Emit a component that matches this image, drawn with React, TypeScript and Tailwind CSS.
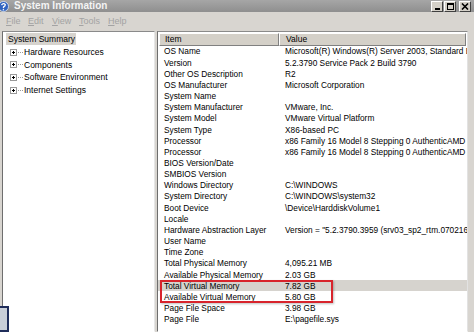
import React from 'react';

const ROWS: [string, string][] = [
  ['OS Name', 'Microsoft(R) Windows(R) Server 2003, Standard Edition'],
  ['Version', '5.2.3790 Service Pack 2 Build 3790'],
  ['Other OS Description', 'R2'],
  ['OS Manufacturer', 'Microsoft Corporation'],
  ['System Name', ''],
  ['System Manufacturer', 'VMware, Inc.'],
  ['System Model', 'VMware Virtual Platform'],
  ['System Type', 'X86-based PC'],
  ['Processor', 'x86 Family 16 Model 8 Stepping 0 AuthenticAMD ~2294 Mhz'],
  ['Processor', 'x86 Family 16 Model 8 Stepping 0 AuthenticAMD ~2294 Mhz'],
  ['BIOS Version/Date', ''],
  ['SMBIOS Version', ''],
  ['Windows Directory', 'C:\\WINDOWS'],
  ['System Directory', 'C:\\WINDOWS\\system32'],
  ['Boot Device', '\\Device\\HarddiskVolume1'],
  ['Locale', ''],
  ['Hardware Abstraction Layer', 'Version = "5.2.3790.3959 (srv03_sp2_rtm.070216-1710)"'],
  ['User Name', ''],
  ['Time Zone', ''],
  ['Total Physical Memory', '4,095.21 MB'],
  ['Available Physical Memory', '2.03 GB'],
  ['Total Virtual Memory', '7.82 GB'],
  ['Available Virtual Memory', '5.80 GB'],
  ['Page File Space', '3.98 GB'],
  ['Page File', 'E:\\pagefile.sys'],
];

const TREE = ['Hardware Resources', 'Components', 'Software Environment', 'Internet Settings'];
const MENU = ['File', 'Edit', 'View', 'Tools', 'Help'];

function CaptionButton({ children }: { children: React.ReactNode }) {
  return (
    <div className="flex h-[11px] w-[12px] items-center justify-center border border-t-white border-l-white border-r-[#404040] border-b-[#404040] bg-[#d4d0c8] text-black">
      {children}
    </div>
  );
}

export default function App() {
  return (
    <div className="relative h-[332px] w-[474px] overflow-hidden bg-[#d8d5d0] font-['Liberation_Sans',Arial,sans-serif] text-black">
      {/* Title bar (inactive) */}
      <div className="flex h-[12px] items-center bg-gradient-to-b from-[#a6a6a6] to-[#8f8f8f]">
        <svg width="11" height="11" viewBox="0 0 11 11" className="-ml-[2px] mr-[5px]">
          <circle cx="5.5" cy="5.5" r="5" fill="#2f63c0" stroke="#dfe8f7" strokeWidth="0.8" />
          <path d="M3.5 4 Q5.5 1.5 7.3 3.6 Q7.4 5 5.6 5.8 L5.4 7.2" fill="none" stroke="#fff" strokeWidth="1.3" />
          <circle cx="5.4" cy="8.8" r="0.8" fill="#fff" />
        </svg>
        <span className="text-[10px] font-bold leading-none text-[#f4f4f4]">System Information</span>
        <div className="ml-auto mr-[3px] flex gap-[1px]">
          <CaptionButton>
            <span className="mt-[5px] block h-[2px] w-[5px] bg-black" />
          </CaptionButton>
          <CaptionButton>
            <span className="block h-[7px] w-[7px] border border-t-2 border-black" />
          </CaptionButton>
          <div className="ml-[2px]">
            <CaptionButton>
              <svg width="8" height="7" viewBox="0 0 8 7">
                <path d="M1 0.5 L7 6.5 M7 0.5 L1 6.5" stroke="#000" strokeWidth="1.6" />
              </svg>
            </CaptionButton>
          </div>
        </div>
      </div>

      {/* Menu bar */}
      <div className="flex h-[19px] items-center pl-[6px] text-[9px] text-[#a3a3a3]">
        {MENU.map((m, i) => (
          <span key={m} className={i === 0 ? 'w-[22px]' : i === 1 ? 'w-[24px]' : i === 2 ? 'w-[27px]' : 'w-[29px]'}>
            <span className="underline underline-offset-1">{m[0]}</span>
            {m.slice(1)}
          </span>
        ))}
      </div>

      {/* Panes */}
      <div className="flex h-[301px] pl-[2px] pr-[6px]">
        {/* Tree pane */}
        <div className="w-[153px] border border-t-[#8a8a8a] border-l-[#6e6e6e] border-r-[#e6e6e6] border-b-white bg-white text-[8.5px]">
          <div className="ml-[3px] mt-[1px] flex h-[12px] w-[70px] items-center bg-[#d6d3ce] pl-[2px]">System Summary</div>
          <div className="mt-[1px] flex flex-col">
            {TREE.map((t) => (
              <div key={t} className="flex h-[12.67px] items-center pl-[7px]">
                <span className="relative flex h-[7px] w-[7px] items-center justify-center border border-[#9a9a9a] bg-white">
                  <span className="absolute h-[1px] w-[3px] bg-black" />
                  <span className="absolute h-[3px] w-[1px] bg-black" />
                </span>
                <span className="mx-[1px] w-[5px] border-t border-dotted border-[#9a9a9a]" />
                <span>{t}</span>
              </div>
            ))}
          </div>
        </div>

        {/* List pane */}
        <div className="ml-[2px] flex min-w-0 flex-1 flex-col overflow-hidden border border-t-[#8a8a8a] border-l-[#6e6e6e] border-r-[#e2e2e2] border-b-white bg-white text-[8.3px]">
          <div className="mx-[1px] mt-[1px] flex h-[13px] shrink-0 text-[8.5px]">
            <div className="flex w-[120px] items-center border border-t-white border-l-white border-r-[#808080] border-b-[#808080] bg-[#d4d0c8] pl-[5px]">Item</div>
            <div className="flex flex-1 items-center border border-t-white border-l-white border-r-[#808080] border-b-[#808080] bg-[#d4d0c8] pl-[6px]">Value</div>
          </div>
          <div className="relative">
            {ROWS.map(([k, v], i) => (
              <div
                key={i}
                className={`flex h-[11.17px] items-center whitespace-nowrap leading-none ${i === 21 ? 'bg-[#d6d3ce]' : ''}`}
              >
                <span className="w-[121px] shrink-0 pl-[6px]">{k}</span>
                <span className="pl-[6px]">{v}</span>
              </div>
            ))}
            {/* Red highlight box */}
            <div className="absolute left-[2px] top-[234px] h-[23px] w-[173px] border-2 border-[#d8242c] shadow-[1px_1px_2px_rgba(0,0,0,0.25)]" />
          </div>
        </div>
      </div>

      {/* Bottom-left fragment */}
      <div className="absolute bottom-0 left-0 h-[26px] w-[9px] border-2 border-l-0 border-[#1f2d5a] bg-[#c9cfd8]" />
    </div>
  );
}
